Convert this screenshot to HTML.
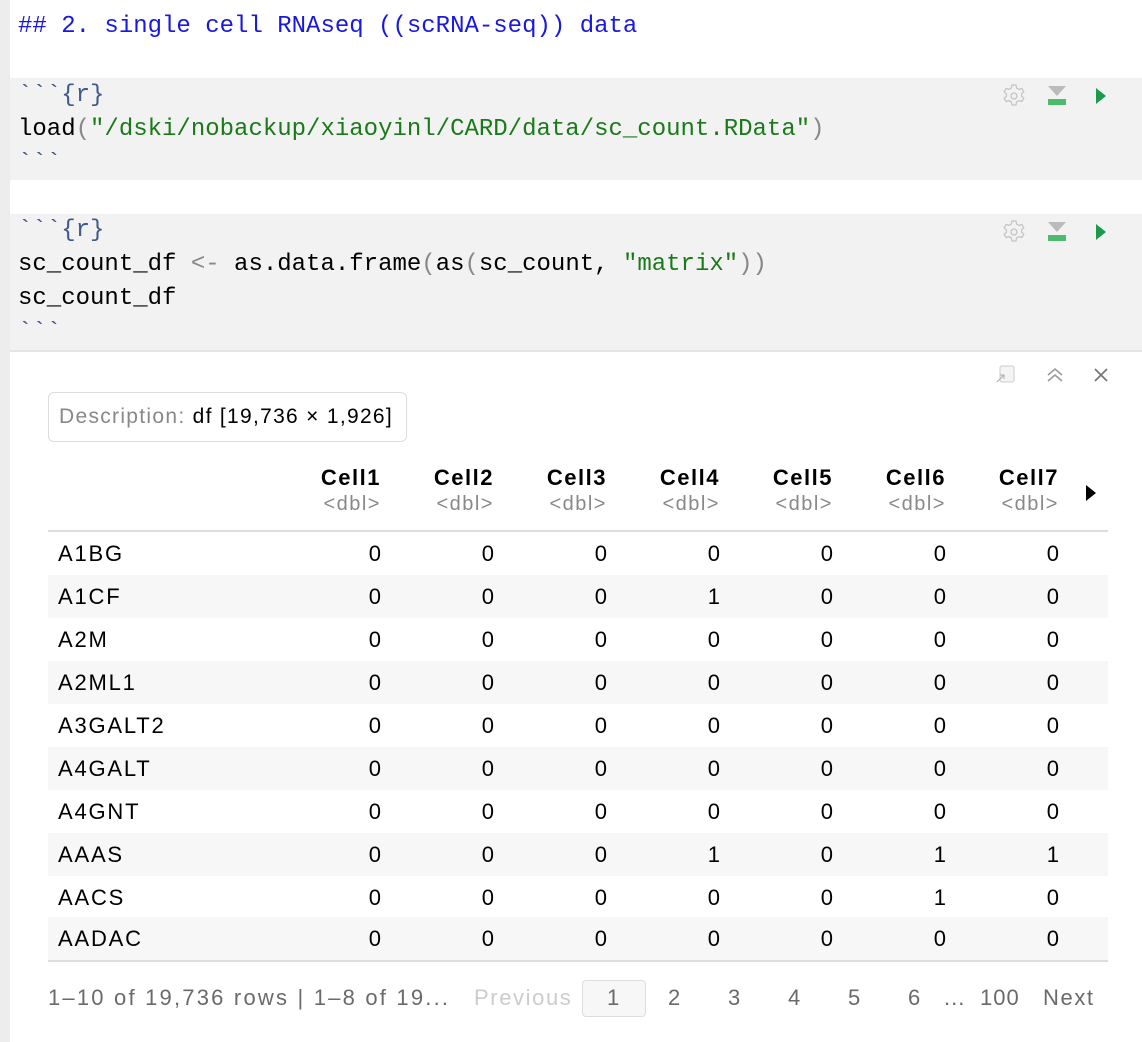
<!DOCTYPE html>
<html><head><meta charset="utf-8"><style>
*{margin:0;padding:0;box-sizing:border-box}
body{width:1142px;height:1042px;background:#fff;position:relative;overflow:hidden;font-family:"Liberation Sans",sans-serif}
.gut{position:absolute;left:0;top:0;width:10px;height:1042px;background:#ededed}
.m{position:absolute;font-family:"Liberation Mono",monospace;font-size:24px;line-height:34px;white-space:nowrap;color:#000;left:18px}
.chunk{position:absolute;left:10px;right:0;background:#f2f2f2}
.g{color:#1a7a1a}.b{color:#3d5a8a}.p{color:#888}
.out{position:absolute;left:10px;top:350px;right:0;bottom:0;background:#fff;border-top:2px solid #e4e4e4}
.desc{position:absolute;left:48px;top:392px;width:359px;height:50px;border:1px solid #ddd;border-radius:6px;font-size:21px;letter-spacing:1.3px;line-height:48px;padding-left:10px;color:#000;white-space:nowrap}
.desc span{color:#888}
.row{position:absolute;left:48px;width:1060px;height:43px;font-size:22px;line-height:43px}
.row div{position:absolute;top:0;text-align:right;width:100px}
.row .n{left:10px;text-align:left;width:200px;letter-spacing:1.8px}
.hd{position:absolute;top:464px;text-align:right;width:100px;line-height:27px;letter-spacing:1.5px}
.hd b{display:block;font-size:22px}
.hd span{color:#888;font-size:20px}
.pg{position:absolute;top:984px;font-size:22px;color:#6a6a6a;line-height:28px;white-space:nowrap;letter-spacing:1px}
</style></head><body>
<div class="gut"></div>
<div class="m" style="top:10px;color:#1818e0">## 2. single cell RNAseq ((scRNA-seq)) data</div>
<div class="chunk" style="top:78px;height:102px"></div>
<div class="m b" style="top:79px">&#96;&#96;&#96;{r}</div>
<div class="m" style="top:113px">load<span class="p">(</span><span class="g">&quot;/dski/nobackup/xiaoyinl/CARD/data/sc_count.RData&quot;</span><span class="p">)</span></div>
<div class="m b" style="top:147px">&#96;&#96;&#96;</div>
<div class="chunk" style="top:214px;height:136px"></div>
<div class="m b" style="top:214px">&#96;&#96;&#96;{r}</div>
<div class="m" style="top:248px">sc_count_df <span class="p">&lt;-</span> as.data.frame<span class="p">(</span>as<span class="p">(</span>sc_count, <span class="g">&quot;matrix&quot;</span><span class="p">))</span></div>
<div class="m" style="top:282px">sc_count_df</div>
<div class="m b" style="top:316px">&#96;&#96;&#96;</div>
<svg style="position:absolute;left:1001px;top:83px" width="26" height="26" viewBox="0 0 26 26"><g fill="none" stroke="#c4c4c4" stroke-width="1.3"><path d="M11 2h4l.6 3 2.4 1.4 2.8-1 2 3.4-2.2 2v2.4l2.2 2-2 3.4-2.8-1-2.4 1.4-.6 3h-4l-.6-3-2.4-1.4-2.8 1-2-3.4 2.2-2v-2.4l-2.2-2 2-3.4 2.8 1 2.4-1.4z"/><circle cx="13" cy="13" r="3"/></g></svg>
<svg style="position:absolute;left:1046px;top:86px" width="22" height="20"><polygon points="2,0 20,0 11,10" fill="#bbb"/><rect x="2" y="13" width="18" height="6" fill="#4cbb6c"/></svg>
<svg style="position:absolute;left:1094px;top:86px" width="14" height="20"><polygon points="2,2 12,10 2,18" fill="#1a9a4a"/></svg>
<svg style="position:absolute;left:1001px;top:219px" width="26" height="26" viewBox="0 0 26 26"><g fill="none" stroke="#c4c4c4" stroke-width="1.3"><path d="M11 2h4l.6 3 2.4 1.4 2.8-1 2 3.4-2.2 2v2.4l2.2 2-2 3.4-2.8-1-2.4 1.4-.6 3h-4l-.6-3-2.4-1.4-2.8 1-2-3.4 2.2-2v-2.4l-2.2-2 2-3.4 2.8 1 2.4-1.4z"/><circle cx="13" cy="13" r="3"/></g></svg>
<svg style="position:absolute;left:1046px;top:222px" width="22" height="20"><polygon points="2,0 20,0 11,10" fill="#bbb"/><rect x="2" y="13" width="18" height="6" fill="#4cbb6c"/></svg>
<svg style="position:absolute;left:1094px;top:222px" width="14" height="20"><polygon points="2,2 12,10 2,18" fill="#1a9a4a"/></svg>
<div class="out"></div>
<svg style="position:absolute;left:994px;top:364px" width="24" height="22"><rect x="6" y="2" width="14" height="16" rx="2" fill="#f4f4f4" stroke="#ccc"/><path d="M3 18 L10 11 M6 11 H10 V15" stroke="#aaa" fill="none"/></svg>
<svg style="position:absolute;left:1045px;top:366px" width="20" height="18"><path d="M3 9 L10 3 L17 9 M3 15 L10 9 L17 15" stroke="#999" stroke-width="1.6" fill="none"/></svg>
<svg style="position:absolute;left:1093px;top:367px" width="16" height="16"><path d="M2 2 L14 14 M14 2 L2 14" stroke="#777" stroke-width="1.8"/></svg>
<div class="desc"><span>Description:</span> df [19,736 × 1,926]</div>
<div class="hd" style="left:281px"><b>Cell1</b><span>&lt;dbl&gt;</span></div>
<div class="hd" style="left:394px"><b>Cell2</b><span>&lt;dbl&gt;</span></div>
<div class="hd" style="left:507px"><b>Cell3</b><span>&lt;dbl&gt;</span></div>
<div class="hd" style="left:620px"><b>Cell4</b><span>&lt;dbl&gt;</span></div>
<div class="hd" style="left:733px"><b>Cell5</b><span>&lt;dbl&gt;</span></div>
<div class="hd" style="left:846px"><b>Cell6</b><span>&lt;dbl&gt;</span></div>
<div class="hd" style="left:959px"><b>Cell7</b><span>&lt;dbl&gt;</span></div>
<svg style="position:absolute;left:1084px;top:483px" width="14" height="20"><polygon points="2,2 12,10 2,18" fill="#000"/></svg>
<div style="position:absolute;left:48px;top:530px;width:1060px;height:2px;background:#ddd"></div>
<div class="row" style="top:532px"><div class="n">A1BG</div><div style="left:233px">0</div><div style="left:346px">0</div><div style="left:459px">0</div><div style="left:572px">0</div><div style="left:685px">0</div><div style="left:798px">0</div><div style="left:911px">0</div></div>
<div class="row" style="top:575px;background:#f7f7f7"><div class="n">A1CF</div><div style="left:233px">0</div><div style="left:346px">0</div><div style="left:459px">0</div><div style="left:572px">1</div><div style="left:685px">0</div><div style="left:798px">0</div><div style="left:911px">0</div></div>
<div class="row" style="top:618px"><div class="n">A2M</div><div style="left:233px">0</div><div style="left:346px">0</div><div style="left:459px">0</div><div style="left:572px">0</div><div style="left:685px">0</div><div style="left:798px">0</div><div style="left:911px">0</div></div>
<div class="row" style="top:661px;background:#f7f7f7"><div class="n">A2ML1</div><div style="left:233px">0</div><div style="left:346px">0</div><div style="left:459px">0</div><div style="left:572px">0</div><div style="left:685px">0</div><div style="left:798px">0</div><div style="left:911px">0</div></div>
<div class="row" style="top:704px"><div class="n">A3GALT2</div><div style="left:233px">0</div><div style="left:346px">0</div><div style="left:459px">0</div><div style="left:572px">0</div><div style="left:685px">0</div><div style="left:798px">0</div><div style="left:911px">0</div></div>
<div class="row" style="top:747px;background:#f7f7f7"><div class="n">A4GALT</div><div style="left:233px">0</div><div style="left:346px">0</div><div style="left:459px">0</div><div style="left:572px">0</div><div style="left:685px">0</div><div style="left:798px">0</div><div style="left:911px">0</div></div>
<div class="row" style="top:790px"><div class="n">A4GNT</div><div style="left:233px">0</div><div style="left:346px">0</div><div style="left:459px">0</div><div style="left:572px">0</div><div style="left:685px">0</div><div style="left:798px">0</div><div style="left:911px">0</div></div>
<div class="row" style="top:833px;background:#f7f7f7"><div class="n">AAAS</div><div style="left:233px">0</div><div style="left:346px">0</div><div style="left:459px">0</div><div style="left:572px">1</div><div style="left:685px">0</div><div style="left:798px">1</div><div style="left:911px">1</div></div>
<div class="row" style="top:876px"><div class="n">AACS</div><div style="left:233px">0</div><div style="left:346px">0</div><div style="left:459px">0</div><div style="left:572px">0</div><div style="left:685px">0</div><div style="left:798px">1</div><div style="left:911px">0</div></div>
<div class="row" style="top:917px;background:#f7f7f7"><div class="n">AADAC</div><div style="left:233px">0</div><div style="left:346px">0</div><div style="left:459px">0</div><div style="left:572px">0</div><div style="left:685px">0</div><div style="left:798px">0</div><div style="left:911px">0</div></div>
<div style="position:absolute;left:48px;top:960px;width:1060px;height:2px;background:#ddd"></div>
<div class="pg" style="left:48px;letter-spacing:2.2px">1–10 of 19,736 rows | 1–8 of 19...</div>
<div class="pg" style="left:474px;color:#ccc;letter-spacing:1.6px">Previous</div>
<div style="position:absolute;left:582px;top:980px;width:64px;height:37px;border:1px solid #ddd;border-radius:4px;background:#f7f7f7"></div>
<div class="pg" style="left:607px">1</div>
<div class="pg" style="left:668px">2</div>
<div class="pg" style="left:728px">3</div>
<div class="pg" style="left:788px">4</div>
<div class="pg" style="left:848px">5</div>
<div class="pg" style="left:908px">6</div>
<div class="pg" style="left:944px">...</div>
<div class="pg" style="left:980px">100</div>
<div class="pg" style="left:1043px;letter-spacing:1.6px">Next</div>
</body></html>
